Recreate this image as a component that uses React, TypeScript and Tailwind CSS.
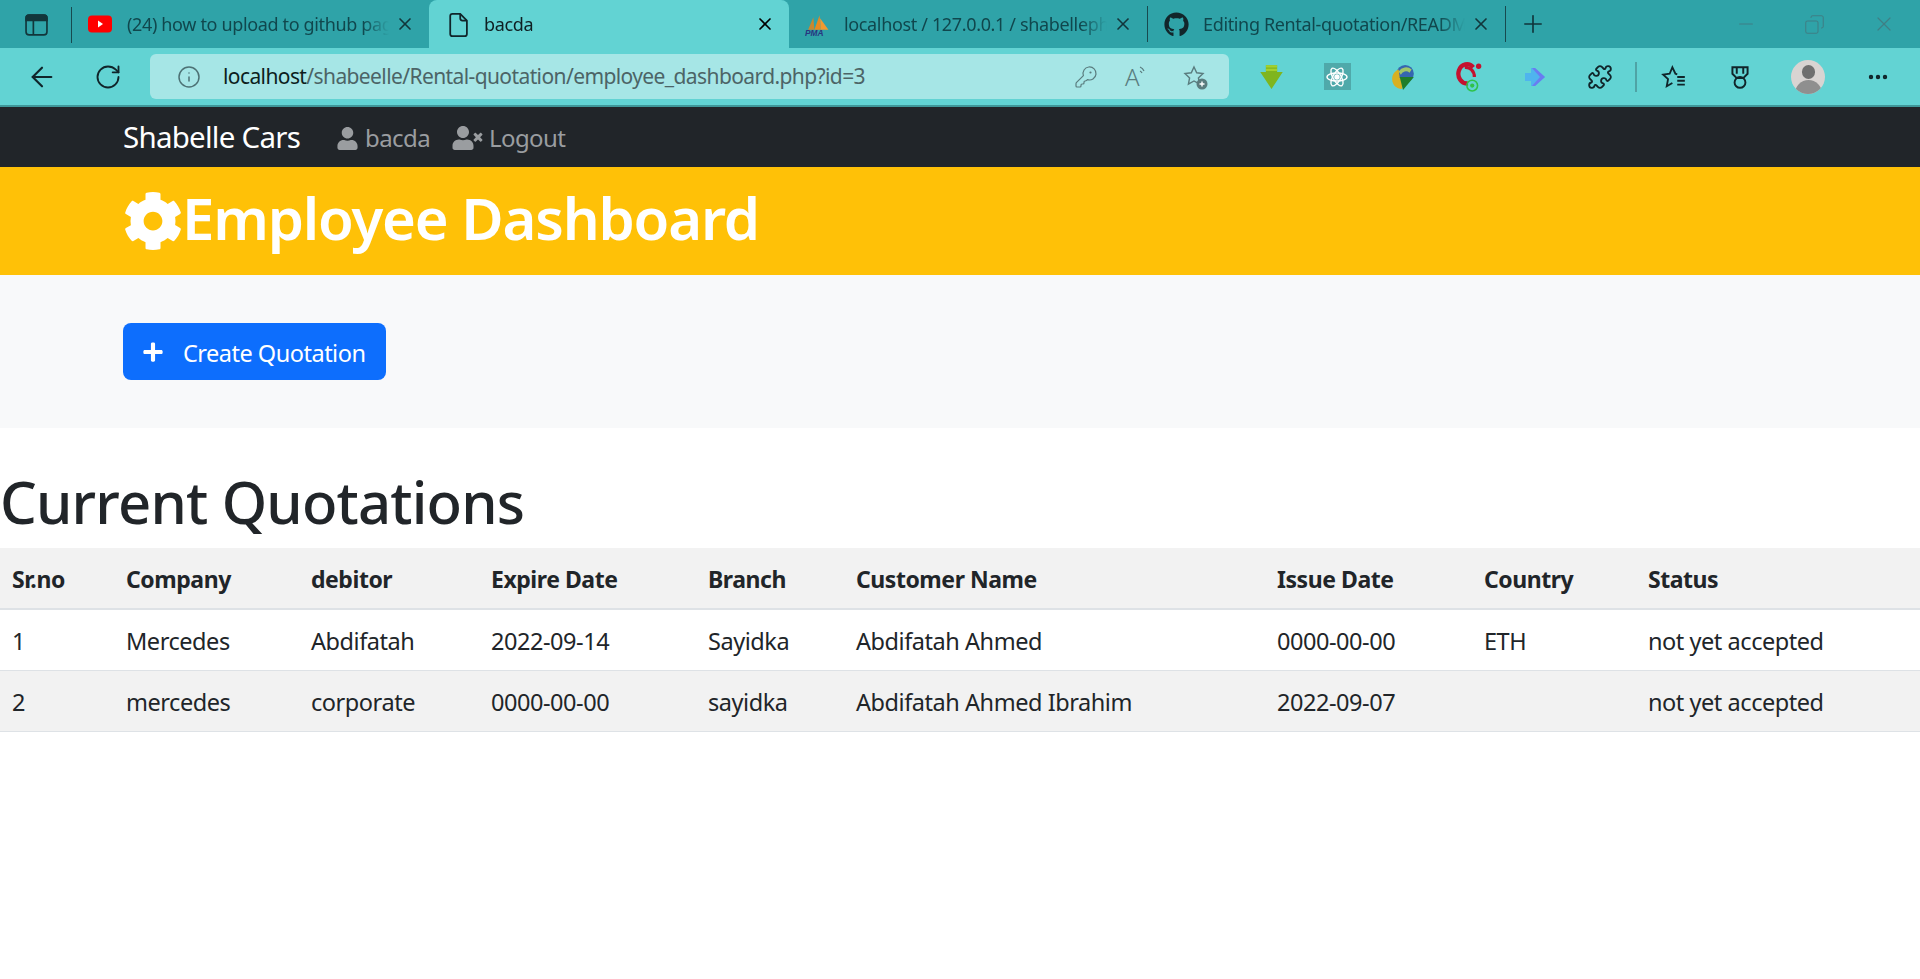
import type { ReactNode } from "react";
import { ArrowLeft, Copy, Info, KeyRound, Minus, MoreHorizontal, Plus, Puzzle, RotateCw, X } from "lucide-react";
import { FaCog, FaGithub, FaPlus, FaUser, FaUserTimes } from "react-icons/fa";

const HEADERS = ["Sr.no", "Company", "debitor", "Expire Date", "Branch", "Customer Name", "Issue Date", "Country", "Status"];
const WIDTHS = ["w-[114px]", "w-[185px]", "w-[180px]", "w-[217px]", "w-[148px]", "w-[421px]", "w-[207px]", "w-[164px]", "w-[284px]"];

const ROWS = [
  ["1", "Mercedes", "Abdifatah", "2022-09-14", "Sayidka", "Abdifatah Ahmed", "0000-00-00", "ETH", "not yet accepted"],
  ["2", "mercedes", "corporate", "0000-00-00", "sayidka", "Abdifatah Ahmed Ibrahim", "2022-09-07", "", "not yet accepted"],
];

function Tab({ icon, title, active, width }: { icon: ReactNode; title: string; active?: boolean; width: string }) {
  return (
    <div className={`flex h-full items-center pl-4 ${width} ${active ? "rounded-t-lg bg-[#62d3d3] text-[#0f1f22]" : "text-[#10474d]"}`}>
      <div className="flex w-[39px] shrink-0 items-center">{icon}</div>
      <span className="min-w-0 flex-1 whitespace-nowrap text-[18px] tracking-[-0.35px] [mask-image:linear-gradient(to_right,black_90%,transparent)]">
        {title}
      </span>
      <X className={`mr-[14px] ml-[6px] size-[20px] shrink-0 ${active ? "text-black" : "text-[#12363b]"}`} strokeWidth={2} />
    </div>
  );
}

function WindowIcon() {
  return (
    <svg viewBox="0 0 22 22" className="size-[23px]" fill="none" stroke="#12363b" strokeWidth="1.6">
      <rect x="1" y="2" width="20" height="19" rx="3" />
      <path d="M1 5a3 3 0 0 1 3-3h14a3 3 0 0 1 3 3v2H1z" fill="#12363b" />
      <path d="M8 7v14" />
    </svg>
  );
}

function YoutubeIcon() {
  return (
    <svg viewBox="0 0 24 17" className="h-[18px] w-[24px]">
      <rect width="24" height="17" rx="4" fill="#f00" />
      <path d="M10 5l5 3.5-5 3.5z" fill="#fff" />
    </svg>
  );
}

function PmaIcon() {
  return (
    <svg viewBox="0 0 24 24" className="size-[25px]">
      <path d="M3 17L8 5l1 12z" fill="#c9882e" />
      <path d="M9 17l5-14 1 14z" fill="#e88a20" />
      <path d="M15 17l-0.5-11 8 11z" fill="#f09a30" />
      <text x="0" y="23.5" fontSize="8" fontWeight="700" fontStyle="italic" fill="#28357f" fontFamily="Liberation Sans, sans-serif">
        PMA
      </text>
    </svg>
  );
}

function ExtensionIcons() {
  return (
    <>
      <div className="flex w-[66px] justify-center">
        <svg viewBox="0 0 24 24" className="size-[27px]">
          <path d="M7 2h10v6h5L12 23 2 8h5z" fill="#7fb51e" />
          <path d="M7 2h10v2H7zM7 5h10v2H7z" fill="#a4d12e" />
        </svg>
      </div>
      <div className="flex w-[66px] justify-center">
        <div className="flex size-[27px] items-center justify-center bg-[#4fa9aa]">
          <svg viewBox="0 0 24 24" className="size-[24px]" fill="none" stroke="#fff" strokeWidth="1.4">
            <ellipse cx="12" cy="12" rx="10" ry="4" />
            <ellipse cx="12" cy="12" rx="10" ry="4" transform="rotate(60 12 12)" />
            <ellipse cx="12" cy="12" rx="10" ry="4" transform="rotate(120 12 12)" />
            <circle cx="12" cy="12" r="2" fill="#fff" />
          </svg>
        </div>
      </div>
      <div className="flex w-[66px] justify-center">
        <svg viewBox="0 0 24 24" className="size-[26px]">
          <circle cx="14" cy="9" r="8" fill="#3566b0" />
          <path d="M8 7a8 8 0 0 1 12-2l-2 3a5 5 0 0 0-8 2z" fill="#9fc66a" />
          <path d="M2 14c0-5 3-8 6-9l1 8 4-1-2 11C6 23 2 19 2 14z" fill="#d8b022" />
          <path d="M9 12h13L12 24z" fill="#1f7d2a" />
        </svg>
      </div>
      <div className="flex w-[66px] justify-center">
        <svg viewBox="0 0 24 28" className="h-[30px] w-[26px]" fill="none">
          <path d="M16 5a8 9 0 1 0-5 15" stroke="#c4122f" strokeWidth="4" />
          <path d="M8 5a8 9 0 0 1 9 9" stroke="#c4122f" strokeWidth="3" />
          <circle cx="21" cy="4" r="2.5" fill="#c4122f" />
          <circle cx="15" cy="22" r="5" stroke="#2fc24a" strokeWidth="1.5" />
          <circle cx="15" cy="22" r="2" fill="#2fc24a" />
        </svg>
      </div>
      <div className="flex w-[66px] justify-center">
        <svg viewBox="0 0 24 24" className="size-[24px]">
          <path d="M2 8h6V3h4l10 9-10 9H8v-5H2z" fill="#4fb4ee" />
          <path d="M12 3l10 9-10 9h-3l8-9-8-9z" fill="#6a7cf0" />
        </svg>
      </div>
    </>
  );
}

function BrowserChrome() {
  return (
    <div className="bg-[#2fa3a8]">
      <div className="flex h-12 items-center">
        <div className="flex w-[71px] shrink-0 items-center pl-[25px]">
          <WindowIcon />
        </div>
        <div className="flex h-full items-center pt-0.5">
          <div className="h-9 w-px bg-[#174a4f]" />
        </div>
        <Tab width="w-[357px]" icon={<YoutubeIcon />} title="(24) how to upload to github pag" />
        <Tab
          width="w-[360px]"
          active
          icon={
            <svg viewBox="0 0 18 22" className="mt-0.5 ml-[3px] h-[26px] w-[20px]" fill="none" stroke="#10252a" strokeWidth="1.6">
              <path d="M2 3a2 2 0 0 1 2-2h7l6 6v12a2 2 0 0 1-2 2H4a2 2 0 0 1-2-2z" />
              <path d="M11 1v4a2 2 0 0 0 2 2h4" />
            </svg>
          }
          title="bacda"
        />
        <Tab width="w-[358px]" icon={<PmaIcon />} title="localhost / 127.0.0.1 / shabelleph" />
        <div className="h-9 w-px bg-[#174a4f]" />
        <Tab width="w-[357px]" icon={<FaGithub className="size-[25px] text-[#12262b]" />} title="Editing Rental-quotation/READM" />
        <div className="h-9 w-px bg-[#174a4f]" />
        <Plus className="ml-[13px] size-[28px] text-[#10343a]" strokeWidth={1.4} />
        <div className="ml-auto flex items-center gap-[47px] pr-6 text-[#3f7f85]">
          <Minus className="size-[22px]" strokeWidth={1.2} />
          <Copy className="size-[21px] -scale-x-100" strokeWidth={1.2} />
          <X className="size-[24px]" strokeWidth={1.2} />
        </div>
      </div>
      <div className="flex h-[57px] items-center bg-[#62d3d3] pl-[26px]">
        <ArrowLeft className="size-[32px] text-[#10252a]" strokeWidth={1.6} />
        <RotateCw className="ml-[36px] size-[28px] text-[#10252a]" strokeWidth={1.6} />
        <div className="ml-[28px] flex h-[45px] w-[1079px] items-center rounded-md bg-[#a6e6e6]">
          <Info className="ml-[27px] size-[24px] text-[#4d7275]" strokeWidth={1.5} />
          <span className="ml-[22px] text-[21px] tracking-[-0.6px] whitespace-nowrap text-[#4c6466]">
            <span className="text-[#0d1e20]">localhost</span>/shabeelle/Rental-quotation/employee_dashboard.php?id=3
          </span>
          <div className="ml-auto flex items-center gap-[27px] pr-[21px] text-[#5a7c7e]">
            <KeyRound className="size-[24px]" strokeWidth={1.2} />
            <div className="flex w-[30px] items-start">
              <span className="text-[24px] leading-none font-light">A</span>
              <svg viewBox="0 0 10 14" className="-ml-px h-[14px] w-[10px]" fill="none" stroke="currentColor" strokeWidth="1.2">
                <path d="M1 2a7 7 0 0 1 4 4M1 6a4 4 0 0 1 2 2" />
              </svg>
            </div>
            <svg viewBox="0 0 26 26" className="size-[26px]" fill="none" stroke="currentColor" strokeWidth="1.4">
              <path d="M12 3l2.7 5.8 6.3.8-4.6 4.3 1.2 6.2L12 17l-5.6 3.1 1.2-6.2L3 9.6l6.3-.8z" />
              <circle cx="20" cy="20" r="5.5" fill="#5a7c7e" stroke="none" />
              <path d="M20 17.5v5M17.5 20h5" stroke="#fff" />
            </svg>
          </div>
        </div>
        <div className="ml-[9px] flex items-center">
          <ExtensionIcons />
          <Puzzle className="ml-[19px] size-[26px] text-[#10252a]" strokeWidth={1.7} />
          <div className="ml-[22px] h-[30px] w-0.5 bg-[#4fa3a5]" />
          <svg viewBox="0 0 24 24" className="ml-6 size-[26px]" fill="none" stroke="#10252a" strokeWidth="1.7">
            <path d="M15 9.5l-1.7-.5L10.5 3 8 9l-6 .8 4.5 4.2-1.2 6.5 5.2-3" />
            <path d="M15 12h7M15 15.5h7M15 19h7" />
          </svg>
          <svg viewBox="0 0 24 24" className="ml-[40px] size-[26px]" fill="none" stroke="#10252a" strokeWidth="1.8">
            <path d="M5 3h14v6l-4 4H9L5 9z" />
            <path d="M9 3v6M15 3v6" />
            <circle cx="12" cy="17" r="5" />
          </svg>
          <div className="ml-[38px] flex size-[34px] flex-col items-center overflow-hidden rounded-full bg-[#d9d4d2]">
            <div className="mt-[5px] h-[15px] w-[13px] rounded-full bg-[#6f6f6f]" />
            <div className="mt-px h-[14px] w-[27px] rounded-t-full bg-[#8f8f8f]" />
          </div>
          <MoreHorizontal className="ml-[41px] size-[24px] text-[#10252a]" strokeWidth={2.4} />
        </div>
      </div>
      <div className="h-0.5 bg-[#3f9799]" />
    </div>
  );
}

export default function App() {
  return (
    <div className="min-h-screen overflow-hidden bg-white font-['Noto_Sans',sans-serif] text-[#212529]">
      <BrowserChrome />

      <nav className="flex h-[60px] items-center bg-[#212529] pl-[123px]">
        <a className="text-[29.5px] tracking-[-0.75px] text-white">Shabelle Cars</a>
        <a className="ml-9 flex items-center gap-[6px] pt-0.5 text-[24px] tracking-[-0.6px] text-[#9a9da0]">
          <FaUser className="size-[23px]" />
          bacda
        </a>
        <a className="ml-[22px] flex items-center gap-[6px] pt-0.5 text-[24px] tracking-[-0.6px] text-[#9a9da0]">
          <FaUserTimes className="size-[24px] w-[31px]" />
          Logout
        </a>
      </nav>

      <header className="flex h-[108px] items-center bg-[#ffc107] pl-[123px] text-white">
        <FaCog className="size-[60px] shrink-0" />
        <h1 className="-ml-px pb-2 text-[58px] font-semibold tracking-[-1.2px] whitespace-nowrap">Employee Dashboard</h1>
      </header>

      <section className="bg-[#f8f9fa] px-[123px] pt-12 pb-12">
        <button
          type="button"
          className="flex h-[57px] w-[263px] items-center rounded-lg bg-[#0d6efd] pl-[19px] text-[23.5px] tracking-[-0.5px] text-white"
        >
          <FaPlus className="size-[22px]" />
          <span className="ml-[19px] pt-1">Create Quotation</span>
        </button>
      </section>

      <h2 className="flex h-[120px] items-center pt-[26px] text-[58px] font-medium tracking-[-0.8px]">Current Quotations</h2>

      <table className="w-full table-fixed border-collapse text-left text-[23.5px] tracking-[-0.45px]">
        <colgroup>
          {WIDTHS.map((w) => (
            <col key={w} className={w} />
          ))}
        </colgroup>
        <thead>
          <tr className="h-[61px] border-b-2 border-[#dee2e6] bg-[#f2f2f2]">
            {HEADERS.map((h) => (
              <th key={h} className="pt-0.5 pl-3 text-[23px] font-bold">
                {h}
              </th>
            ))}
          </tr>
        </thead>
        <tbody>
          {ROWS.map((row, i) => (
            <tr key={row[0]} className={`h-[61px] border-b border-[#dee2e6] ${i % 2 ? "bg-[#f2f2f2]" : ""}`}>
              {row.map((cell, j) => (
                <td key={j} className="pt-1 pl-3 whitespace-nowrap">
                  {cell}
                </td>
              ))}
            </tr>
          ))}
        </tbody>
      </table>
    </div>
  );
}
